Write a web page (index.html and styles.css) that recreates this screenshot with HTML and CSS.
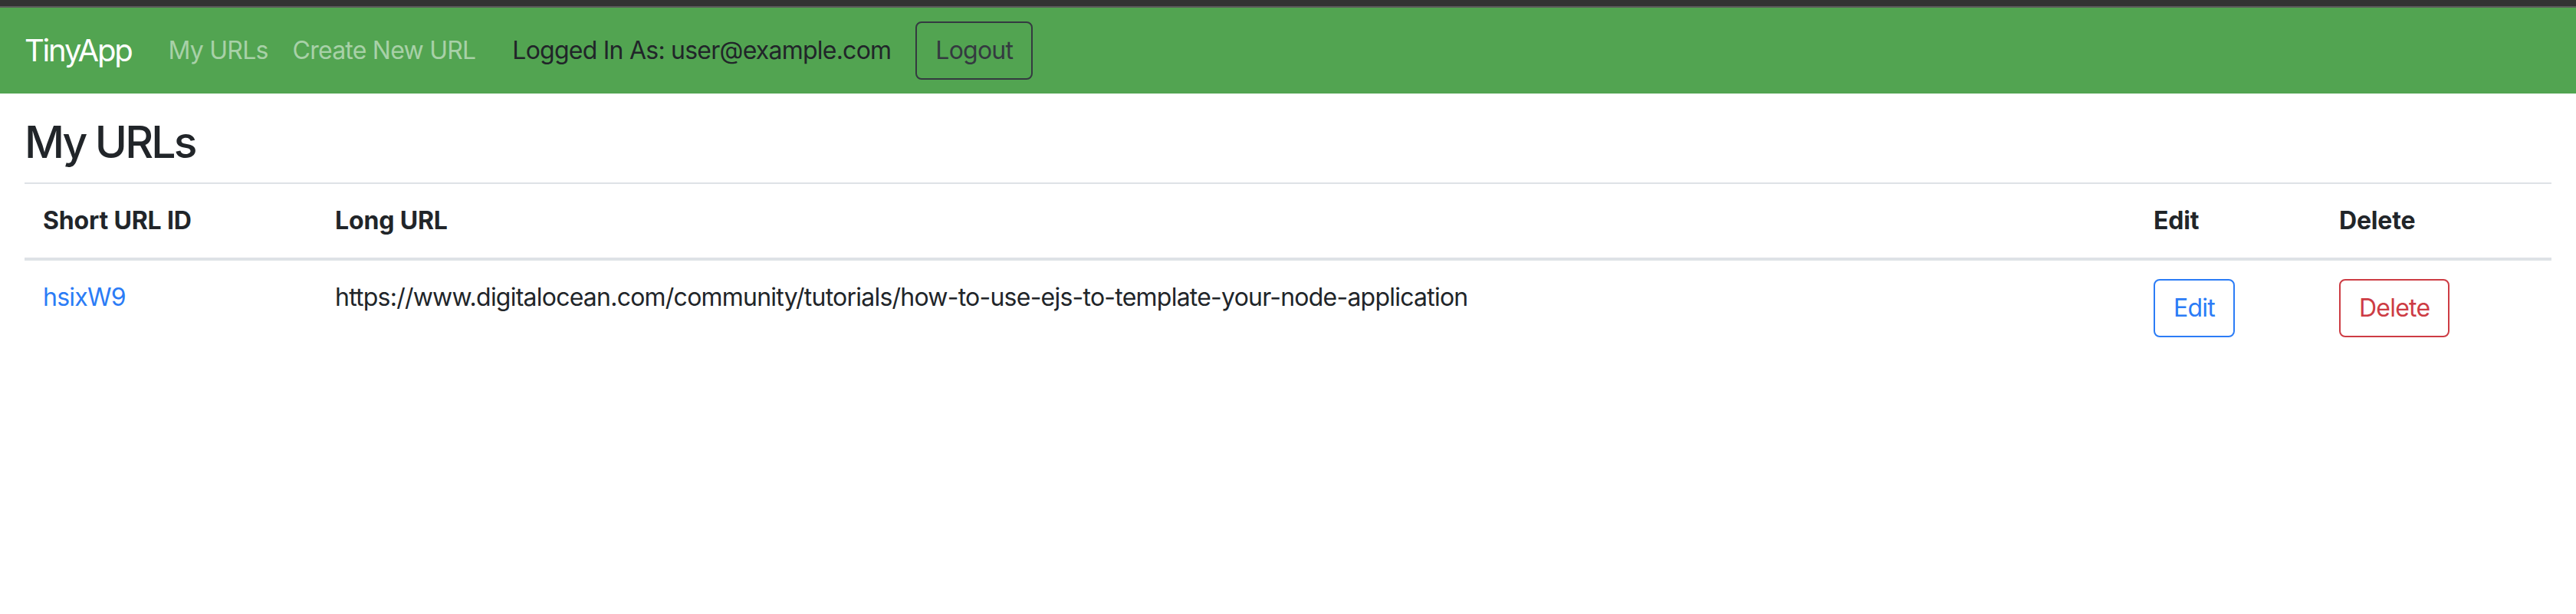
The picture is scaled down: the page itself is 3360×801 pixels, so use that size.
FILE: index.html
```html
<!DOCTYPE html>
<html lang="en">
<head>
<meta charset="utf-8">
<title>TinyApp</title>
<link rel="stylesheet" href="styles.css">
</head>
<body>
<div class="topbar"></div>
<nav class="navbar">
  <a class="brand" href="#">TinyApp</a>
  <ul class="nav">
    <li><a class="nav-link" href="#">My URLs</a></li>
    <li><a class="nav-link" href="#">Create New URL</a></li>
  </ul>
  <span class="user">Logged In As: user@example.com</span>
  <button class="btn btn-dark">Logout</button>
</nav>
<main class="container">
  <h1 class="title">My URLs</h1>
  <table class="table">
    <thead>
      <tr>
        <th class="col-id">Short URL ID</th>
        <th class="col-long">Long URL</th>
        <th class="col-edit">Edit</th>
        <th class="col-del">Delete</th>
      </tr>
    </thead>
    <tbody>
      <tr>
        <td><a class="link" href="#">hsixW9</a></td>
        <td>https://www.digitalocean.com/community/tutorials/how-to-use-ejs-to-template-your-node-application</td>
        <td><button class="btn btn-primary">Edit</button></td>
        <td><button class="btn btn-danger">Delete</button></td>
      </tr>
    </tbody>
  </table>
</main>
</body>
</html>
```
FILE: styles.css
```css
html, body {
  margin: 0;
  padding: 0;
  background: #ffffff;
}
body {
  font-family: Inter, "Noto Sans", "Liberation Sans", sans-serif;
  font-size: 32px;
  line-height: 48px;
  letter-spacing: -0.024em;
  color: #212529;
}
.topbar {
  height: 8px;
  background: #333333;
  border-bottom: 2px solid #5b5b5b;
}
.navbar {
  display: flex;
  align-items: center;
  background: #52a451;
  padding: 16px 32px;
  height: 80px;
}
.brand {
  color: #ffffff;
  text-decoration: none;
  font-size: 40px;
  line-height: 60px;
  letter-spacing: -0.055em;
  padding: 10px 0;
  margin-right: 32px;
}
.nav {
  display: flex;
  list-style: none;
  margin: 0;
  padding: 0;
}
.nav-link {
  display: block;
  padding: 16px;
  color: rgba(255, 255, 255, 0.5);
  text-decoration: none;
}
.user {
  margin-left: 32px;
  margin-right: 32px;
  color: #212529;
}
.btn {
  font-family: inherit;
  font-size: 32px;
  line-height: 48px;
  letter-spacing: inherit;
  padding: 12px 24px;
  background: transparent;
  border: 2px solid;
  border-radius: 8px;
  cursor: pointer;
}
.btn-dark {
  color: #343a40;
  border-color: #343a40;
}
.btn-primary {
  color: #2b7cf6;
  border-color: #2b7cf6;
}
.btn-danger {
  color: #cd3c44;
  border-color: #cd3c44;
}
.container {
  padding: 0 32px;
}
.title {
  font-size: 57px;
  font-weight: 500;
  line-height: 72px;
  letter-spacing: -0.05em;
  margin: 28px 0 16px;
}
.table {
  width: 100%;
  border-collapse: collapse;
}
.table th,
.table td {
  padding: 24px;
  text-align: left;
  vertical-align: top;
  border-top: 2px solid #dee2e6;
}
.table th {
  font-weight: 700;
  letter-spacing: -0.005em;
  border-bottom: 4px solid #dee2e6;
}
.col-id { width: 333px; }
.col-long { width: 2324px; }
.col-edit { width: 194px; }
.col-del { width: 253px; }
.link {
  color: #2b7cf6;
  text-decoration: none;
}
```
